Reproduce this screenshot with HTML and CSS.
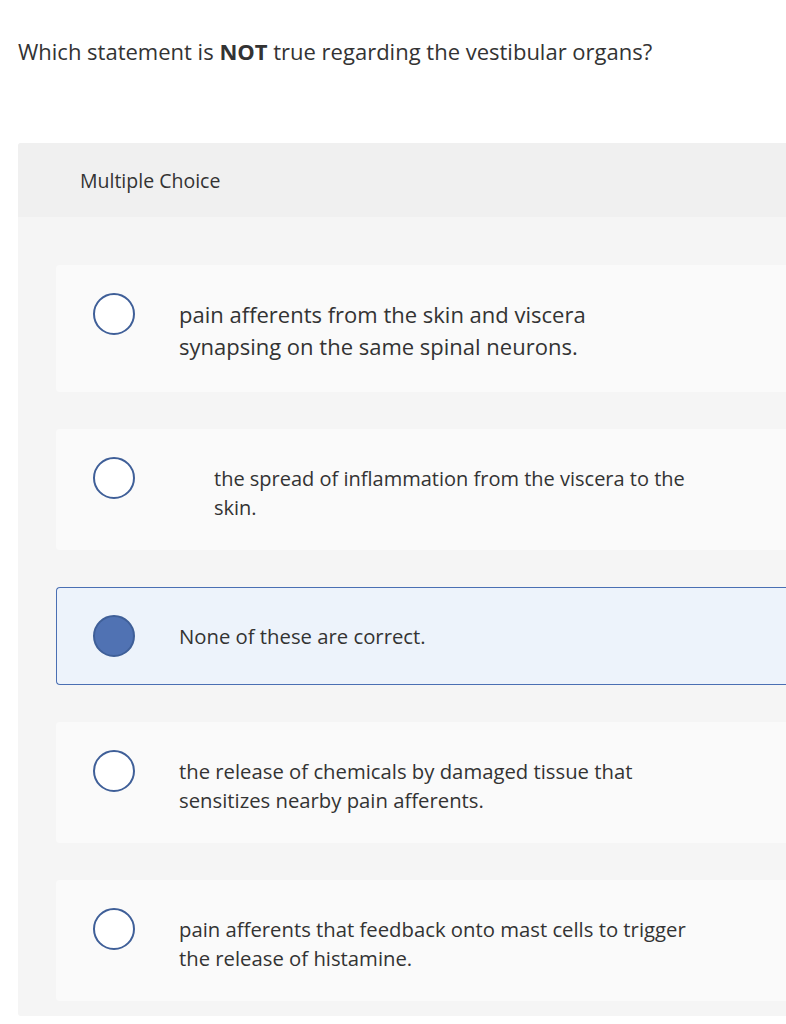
FILE: index.html
```html
<!DOCTYPE html>
<html>
<head>
<meta charset="utf-8">
<link rel="stylesheet" href="styles.css">
</head>
<body>
<div class="page">
  <p class="question">Which statement is <strong>NOT</strong> true regarding the vestibular organs?</p>
  <div class="panel">
    <div class="panel-head">Multiple Choice</div>
    <div class="panel-body">
      <div class="choice choice-tall">
        <span class="radio"></span>
        <p class="choice-text">pain afferents from the skin and viscera<br>synapsing on the same spinal neurons.</p>
      </div>
      <div class="choice">
        <span class="radio"></span>
        <p class="choice-text choice-indent">the spread of inflammation from the viscera to the<br>skin.</p>
      </div>
      <div class="choice selected">
        <span class="radio"></span>
        <p class="choice-text">None of these are correct.</p>
      </div>
      <div class="choice">
        <span class="radio"></span>
        <p class="choice-text">the release of chemicals by damaged tissue that<br>sensitizes nearby pain afferents.</p>
      </div>
      <div class="choice">
        <span class="radio"></span>
        <p class="choice-text">pain afferents that feedback onto mast cells to trigger<br>the release of histamine.</p>
      </div>
    </div>
  </div>
</div>
</body>
</html>
```

FILE: styles.css
```css
html, body {
  margin: 0;
  padding: 0;
  background: #ffffff;
  overflow: hidden;
}
body {
  font-family: "Open Sans", "Noto Sans", sans-serif;
  color: #333333;
}
.page {
  padding: 0 0 0 18px;
  width: 800px;
}
.question {
  margin: 0;
  padding-top: 37px;
  height: 143px;
  box-sizing: border-box;
  font-size: 22px;
  line-height: 28px;
}
.question strong {
  font-weight: 700;
}
.panel {
  background: #f5f5f5;
  border-radius: 3px 0 0 3px;
  padding-bottom: 15px;
}
.panel-head {
  background: #f0f0f0;
  height: 74px;
  box-sizing: border-box;
  padding: 0 0 0 62px;
  display: flex;
  align-items: center;
  font-size: 19.5px;
  border-radius: 3px 0 0 0;
}
.panel-body {
  padding: 48px 0 0 38px;
  display: flex;
  flex-direction: column;
  gap: 37px;
}
.choice {
  background: #fafafa;
  border: 1px solid transparent;
  border-right: none;
  border-radius: 4px 0 0 4px;
  padding: 27px 0 27px 36px;
  display: flex;
  align-items: flex-start;
}
.choice.selected {
  background: #edf3fb;
  border-color: #4a6fb3;
}
.radio {
  flex: none;
  width: 42px;
  height: 42px;
  box-sizing: border-box;
  border: 2px solid #3f5f98;
  border-radius: 50%;
  background: #ffffff;
}
.selected .radio {
  background: #5072b3;
  border-color: #3f5f98;
}
.choice-text {
  margin: 7px 0 0 44px;
  font-size: 20.3px;
  line-height: 29px;
}
.choice-tall .choice-text {
  margin: 5px 0 2px 44px;
  font-size: 22px;
  line-height: 32px;
}
.choice-indent {
  margin-left: 79px;
  font-size: 20px;
}
```
